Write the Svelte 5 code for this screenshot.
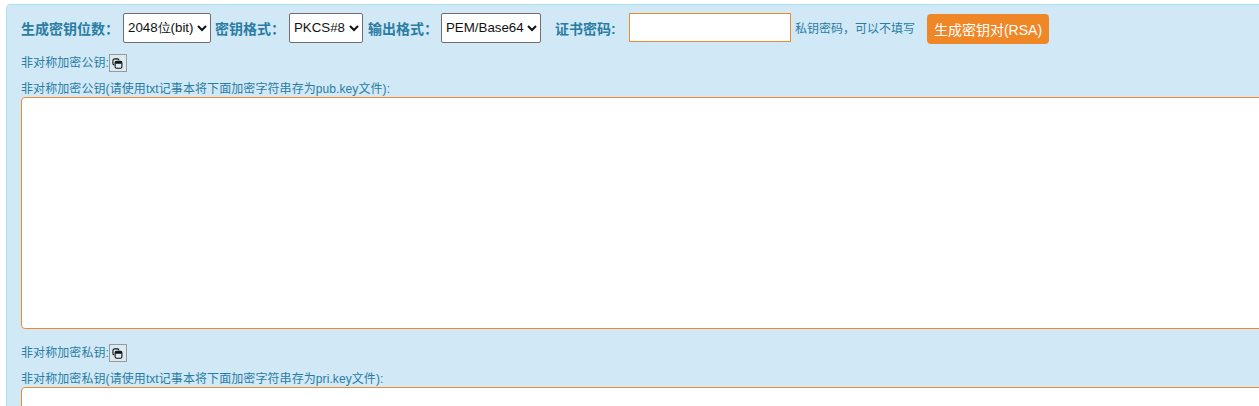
<script>
  let bits = $state('2048');
  let format = $state('pkcs8');
  let output = $state('pem');
  let password = $state('');
  let publicKey = $state('');
  let privateKey = $state('');
</script>

{#snippet copyIcon()}
  <svg width="11" height="11" viewBox="0 0 12 12" aria-hidden="true">
    <path d="M2.5 7.5 A1.5 1.5 0 0 1 1 6 V3 A2 2 0 0 1 3 1 H6 A1.5 1.5 0 0 1 7.5 2.5" fill="none" stroke="#111" stroke-width="1.2" />
    <rect x="3.4" y="3.6" width="7.4" height="7.6" rx="1.6" fill="none" stroke="#111" stroke-width="1.2" />
    <rect x="3.4" y="3.6" width="7.4" height="2.6" rx="1" fill="#111" />
  </svg>
{/snippet}

<div class="panel">
  <div class="options">
    <span class="label first">生成密钥位数：</span>
    <select class="bits" bind:value={bits}>
      <option value="1024">1024位(bit)</option>
      <option value="2048">2048位(bit)</option>
      <option value="4096">4096位(bit)</option>
    </select>
    <span class="label second">密钥格式：</span>
    <select class="format" bind:value={format}>
      <option value="pkcs8">PKCS#8</option>
      <option value="pkcs1">PKCS#1</option>
    </select>
    <span class="label third">输出格式：</span>
    <select class="output" bind:value={output}>
      <option value="pem">PEM/Base64</option>
      <option value="hex">Hex</option>
    </select>
    <span class="label pass">证书密码:</span>
    <input class="password" type="text" bind:value={password} />
    <span class="hint">私钥密码，可以不填写</span>
    <button class="generate">生成密钥对(RSA)</button>
  </div>

  <div class="title first-title">非对称加密公钥:<button class="copy" title="复制">{@render copyIcon()}</button></div>
  <div class="title">非对称加密公钥(请使用txt记事本将下面加密字符串存为pub.key文件):</div>
  <textarea class="key" bind:value={publicKey}></textarea>

  <div class="title second-title">非对称加密私钥:<button class="copy" title="复制">{@render copyIcon()}</button></div>
  <div class="title">非对称加密私钥(请使用txt记事本将下面加密字符串存为pri.key文件):</div>
  <textarea class="key" bind:value={privateKey}></textarea>
</div>

<style>
  :global(body) {
    margin: 0;
    overflow: hidden;
    height: 406px;
    background: #fff;
    font-family: "Liberation Sans", "Noto Sans CJK SC", sans-serif;
  }

  .panel {
    margin: 4px 0 0 6px;
    width: 1400px;
    height: 500px;
    box-sizing: border-box;
    padding: 7px 14px;
    background: #d1e9f6;
    border: 1px solid #a9e2ef;
    border-radius: 4px;
  }

  .options {
    display: flex;
    align-items: center;
    height: 31px;
  }

  .label {
    font-size: 14px;
    font-weight: bold;
    color: #2a7ca3;
    white-space: nowrap;
  }

  .label.first {
    width: 102px;
  }

  .label.second {
    width: 74px;
  }

  .label.third {
    width: 73px;
  }

  .label.pass {
    margin-left: 14px;
    width: 74px;
  }

  select {
    box-sizing: border-box;
    height: 30px;
    font-family: "Liberation Sans", sans-serif;
    font-size: 13.3px;
    background: #fff;
    color: #111;
    border: 1px solid #6f6f6f;
    border-radius: 2px;
  }

  .bits { width: 88px; margin: 0 4px 0 0; }
  .format { width: 74px; margin: 0 5px 0 0; }
  .output { width: 100px; margin: 0; }

  .password {
    box-sizing: border-box;
    width: 162px;
    height: 29px;
    padding: 0 6px;
    background: #fff;
    border: 1px solid #ef8a2b;
    outline: none;
  }

  .hint {
    margin-left: 4px;
    width: 132px;
    font-size: 12px;
    color: #2a7ca3;
    white-space: nowrap;
  }

  .generate {
    box-sizing: border-box;
    width: 122px;
    height: 30px;
    margin-top: 2px;
    padding: 0;
    font-family: inherit;
    font-size: 14px;
    color: #fff;
    background: #ef8727;
    border: none;
    border-radius: 4px;
  }

  .title {
    display: flex;
    align-items: center;
    font-size: 12px;
    line-height: 16px;
    letter-spacing: 0.08px;
    color: #2a7ca3;
    white-space: nowrap;
  }

  .first-title {
    height: 18px;
    margin-top: 11px;
    margin-bottom: 9px;
  }

  .second-title {
    height: 18px;
    margin-top: 15px;
    margin-bottom: 9px;
  }

  .copy {
    display: flex;
    align-items: center;
    justify-content: center;
    box-sizing: border-box;
    width: 18px;
    height: 18px;
    padding: 0;
    background: #dbe9f2;
    border: 1px solid #999;
  }

  .key {
    display: block;
    box-sizing: border-box;
    width: 1300px;
    height: 232px;
    margin: 0;
    padding: 4px;
    background: #fff;
    border: 1px solid #ef8a2b;
    border-radius: 4px;
    outline: none;
    resize: none;
  }
</style>
